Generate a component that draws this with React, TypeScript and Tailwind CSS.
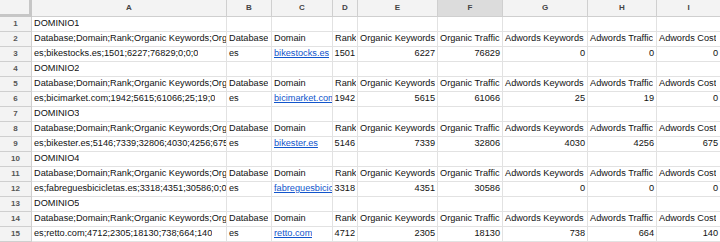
import React from "react";

type Row = string[];

const COLS = ["A", "B", "C", "D", "E", "F", "G", "H", "I"];

const HEAD: Row = [
  "Database;Domain;Rank;Organic Keywords;Organic Traffic;Adwords Keywords;Adwords Traffic;Adwords Cost",
  "Database",
  "Domain",
  "Rank",
  "Organic Keywords",
  "Organic Traffic",
  "Adwords Keywords",
  "Adwords Traffic",
  "Adwords Cost",
];

const domains: [string, Row][] = [
  ["DOMINIO1", ["es;bikestocks.es;1501;6227;76829;0;0;0", "es", "bikestocks.es", "1501", "6227", "76829", "0", "0", "0"]],
  ["DOMINIO2", ["es;bicimarket.com;1942;5615;61066;25;19;0", "es", "bicimarket.com", "1942", "5615", "61066", "25", "19", "0"]],
  ["DOMINIO3", ["es;bikester.es;5146;7339;32806;4030;4256;675", "es", "bikester.es", "5146", "7339", "32806", "4030", "4256", "675"]],
  ["DOMINIO4", ["es;fabreguesbicicletas.es;3318;4351;30586;0;0;0", "es", "fabreguesbicicletas.es", "3318", "4351", "30586", "0", "0", "0"]],
  ["DOMINIO5", ["es;retto.com;4712;2305;18130;738;664;140", "es", "retto.com", "4712", "2305", "18130", "738", "664", "140"]],
];

function Cell({ value, col, kind }: { value?: string; col: number; kind: "title" | "head" | "data" }) {
  const numeric = kind === "data" && col >= 3;
  const link = kind === "data" && col === 2;
  return (
    <div
      className={`flex items-center overflow-hidden whitespace-nowrap border-r border-b border-[#e2e2e2] bg-white ${
        numeric ? "justify-end pr-[2px]" : "justify-start"
      }`}
    >
      {numeric ? (
        <span className="text-[#111]">{value}</span>
      ) : (
        <span className="min-w-0 overflow-hidden pl-[2px]">
          <span className={link ? "text-[#1155cc] underline" : "text-[#111]"}>{value}</span>
        </span>
      )}
    </div>
  );
}

export default function App() {
  const rows: { kind: "title" | "head" | "data"; cells: Row }[] = [];
  domains.forEach(([name, data]) => {
    rows.push({ kind: "title", cells: [name] });
    rows.push({ kind: "head", cells: HEAD });
    rows.push({ kind: "data", cells: data });
  });

  return (
    <div
      className="h-[242px] w-[720px] overflow-hidden bg-white text-[9.2px]"
      style={{ fontFamily: '"Liberation Sans", Arial, sans-serif' }}
    >
      <div className="grid w-[721px] grid-cols-[32px_195px_45px_61px_25px_80px_65px_85px_69px_64px] grid-rows-[17px_repeat(15,15px)]">
        {/* corner */}
        <div className="border-r-[3px] border-b-[3px] border-[#c6c6c6] bg-[#f3f3f3]" />
        {COLS.map((c) => (
          <div
            key={c}
            className={`flex items-center justify-center border-r border-b border-[#cfcfcf] text-[8px] font-bold text-[#444] ${
              c === "F" ? "bg-[#dcdcdc]" : "bg-[#f3f3f3]"
            }`}
          >
            {c}
          </div>
        ))}

        {rows.map((r, i) => (
          <React.Fragment key={i}>
            <div className="flex items-center justify-center border-r border-b border-[#cfcfcf] bg-[#f3f3f3] text-[8px] font-bold text-[#555]">
              {i + 1}
            </div>
            {COLS.map((_, ci) => (
              <Cell key={ci} col={ci} kind={r.kind} value={r.cells[ci]} />
            ))}
          </React.Fragment>
        ))}
      </div>
    </div>
  );
}
